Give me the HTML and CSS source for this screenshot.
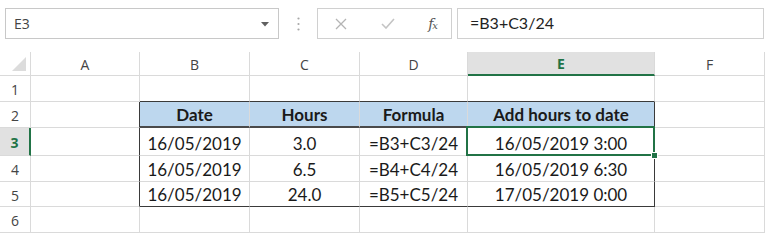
FILE: index.html
```html
<!DOCTYPE html>
<html>
<head>
<meta charset="utf-8">
<link rel="stylesheet" href="styles.css">
</head>
<body>
<div class="toolbar">
  <div class="namebox">
    <span class="name">E3</span>
    <svg class="arrow" width="8" height="5" viewBox="0 0 8 5"><path d="M0 0H8L4 4.5Z" fill="#606060"/></svg>
  </div>
  <div class="dots">
    <svg width="3" height="14" viewBox="0 0 3 14"><circle cx="1.5" cy="1.5" r="1.1" fill="#a8a8a8"/><circle cx="1.5" cy="7" r="1.1" fill="#a8a8a8"/><circle cx="1.5" cy="12.5" r="1.1" fill="#a8a8a8"/></svg>
  </div>
  <div class="fnbox">
    <svg class="ic" width="12" height="12" viewBox="0 0 12 12"><path d="M1 1L11 11M11 1L1 11" stroke="#b4b4b4" stroke-width="1.3" fill="none"/></svg>
    <svg class="ic" width="14" height="11" viewBox="0 0 14 11"><path d="M1 6L5 10L13 1" stroke="#c4c4c4" stroke-width="1.6" fill="none"/></svg>
    <span class="fx">f<span class="fxx">x</span></span>
  </div>
  <div class="formula">=B3+C3/24</div>
</div>
<div class="sheet">
  <div class="c corner"><span class="tri"></span></div>
  <div class="c ch">A</div>
  <div class="c ch">B</div>
  <div class="c ch">C</div>
  <div class="c ch">D</div>
  <div class="c ch sel">E</div>
  <div class="c ch">F</div>

  <div class="c rh">1</div>
  <div class="c"></div>
  <div class="c tt"></div>
  <div class="c tt"></div>
  <div class="c tt"></div>
  <div class="c tt"></div>
  <div class="c"></div>

  <div class="c rh">2</div>
  <div class="c tl"></div>
  <div class="c hd">Date</div>
  <div class="c hd">Hours</div>
  <div class="c hd">Formula</div>
  <div class="c hd tr">Add hours to date</div>
  <div class="c"></div>

  <div class="c rh rsel">3</div>
  <div class="c tl"></div>
  <div class="c v">16/05/2019</div>
  <div class="c v">3.0</div>
  <div class="c v">=B3+C3/24</div>
  <div class="c v tr active">16/05/2019 3:00</div>
  <div class="c"></div>

  <div class="c rh">4</div>
  <div class="c tl"></div>
  <div class="c v">16/05/2019</div>
  <div class="c v">6.5</div>
  <div class="c v">=B4+C4/24</div>
  <div class="c v tr">16/05/2019 6:30</div>
  <div class="c"></div>

  <div class="c rh">5</div>
  <div class="c tl"></div>
  <div class="c v tb">16/05/2019</div>
  <div class="c v tb">24.0</div>
  <div class="c v tb">=B5+C5/24</div>
  <div class="c v tr tb">17/05/2019 0:00</div>
  <div class="c"></div>

  <div class="c rh">6</div>
  <div class="c"></div>
  <div class="c"></div>
  <div class="c"></div>
  <div class="c"></div>
  <div class="c"></div>
  <div class="c"></div>
</div>
</body>
</html>
```
FILE: styles.css
```css
* { box-sizing: border-box; }
html, body { margin: 0; padding: 0; background: #fff; }
body { width: 768px; height: 235px; overflow: hidden; font-family: "Open Sans", "Liberation Sans", sans-serif; }

.toolbar {
  display: flex;
  align-items: stretch;
  padding: 8px 0 0 5px;
  height: 39px;
}
.namebox {
  width: 274px;
  border: 1px solid #c8c8c8;
  display: flex;
  align-items: center;
  justify-content: space-between;
  padding: 0 9px 1px 8px;
}
.name { font-size: 14px; color: #444; }
.arrow { margin-top: 2px; }
.dots {
  width: 38px;
  display: flex;
  align-items: center;
  justify-content: center;
}
.fnbox {
  width: 135px;
  border: 1px solid #d0d0d0;
  display: flex;
  align-items: center;
  padding: 0 14px 0 17px;
  justify-content: space-between;
}
.fx {
  font-family: "DejaVu Serif", "Liberation Serif", serif;
  font-style: italic;
  font-size: 14px;
  color: #555;
  letter-spacing: -1px;
}
.fxx { font-size: 10px; }
.formula {
  margin-left: 5px;
  width: 307px;
  border: 1px solid #d0d0d0;
  display: flex;
  align-items: center;
  padding: 0 0 2px 12px;
  font-family: "Lato", "Open Sans", sans-serif;
  font-size: 16px;
  color: #222;
}

.sheet {
  margin-top: 13px;
  display: grid;
  grid-template-columns: 31px 109px 110px 110px 108px 187px 110px;
  grid-template-rows: 24px 26px 26px 28px 26px 25px 26px;
  width: 765px;
}
.c {
  border-right: 1px solid #dadada;
  border-bottom: 1px solid #dadada;
  display: flex;
  align-items: center;
  justify-content: center;
  font-family: "Lato", "Open Sans", sans-serif;
  font-size: 17px;
  color: #1a1a1a;
  white-space: nowrap;
}
.corner { position: relative; }
.tri {
  position: absolute;
  right: 4px;
  bottom: 4px;
  width: 0; height: 0;
  border-left: 14px solid transparent;
  border-bottom: 14px solid #dcdcdc;
}
.ch {
  font-family: "Open Sans", sans-serif;
  font-size: 14px;
  color: #444;
  padding-top: 1px;
}
.ch.sel {
  background: #e1e1e1;
  color: #217346;
  font-weight: bold;
  border-bottom: 2px solid #217346;
}
.rh {
  font-family: "Open Sans", sans-serif;
  font-size: 14px;
  color: #444;
  padding-top: 2px;
}
.rh.rsel {
  background: #e1e1e1;
  color: #217346;
  font-weight: bold;
  border-right: 2px solid #217346;
}
.tt { border-bottom-color: #3a3a3a; }
.tl { border-right-color: #3a3a3a; }
.tr { border-right-color: #3a3a3a; }
.tb { border-bottom-color: #3a3a3a; }
.hd {
  background: #bdd7ee;
  font-weight: bold;
  border-bottom: 2px solid #4a4a4a;
  align-items: flex-end;
  padding-bottom: 1px;
}
.v { align-items: flex-end; padding-bottom: 1px; }
.active { position: relative; }
.active::after {
  content: "";
  position: absolute;
  top: -2px; left: -2px; right: -1px; bottom: -1px;
  border: 2px solid #217346;
}
.active::before {
  content: "";
  position: absolute;
  right: -4px; bottom: -4px;
  width: 5px; height: 5px;
  background: #217346;
  border: 1px solid #fff;
  box-sizing: content-box;
  z-index: 2;
}
```
